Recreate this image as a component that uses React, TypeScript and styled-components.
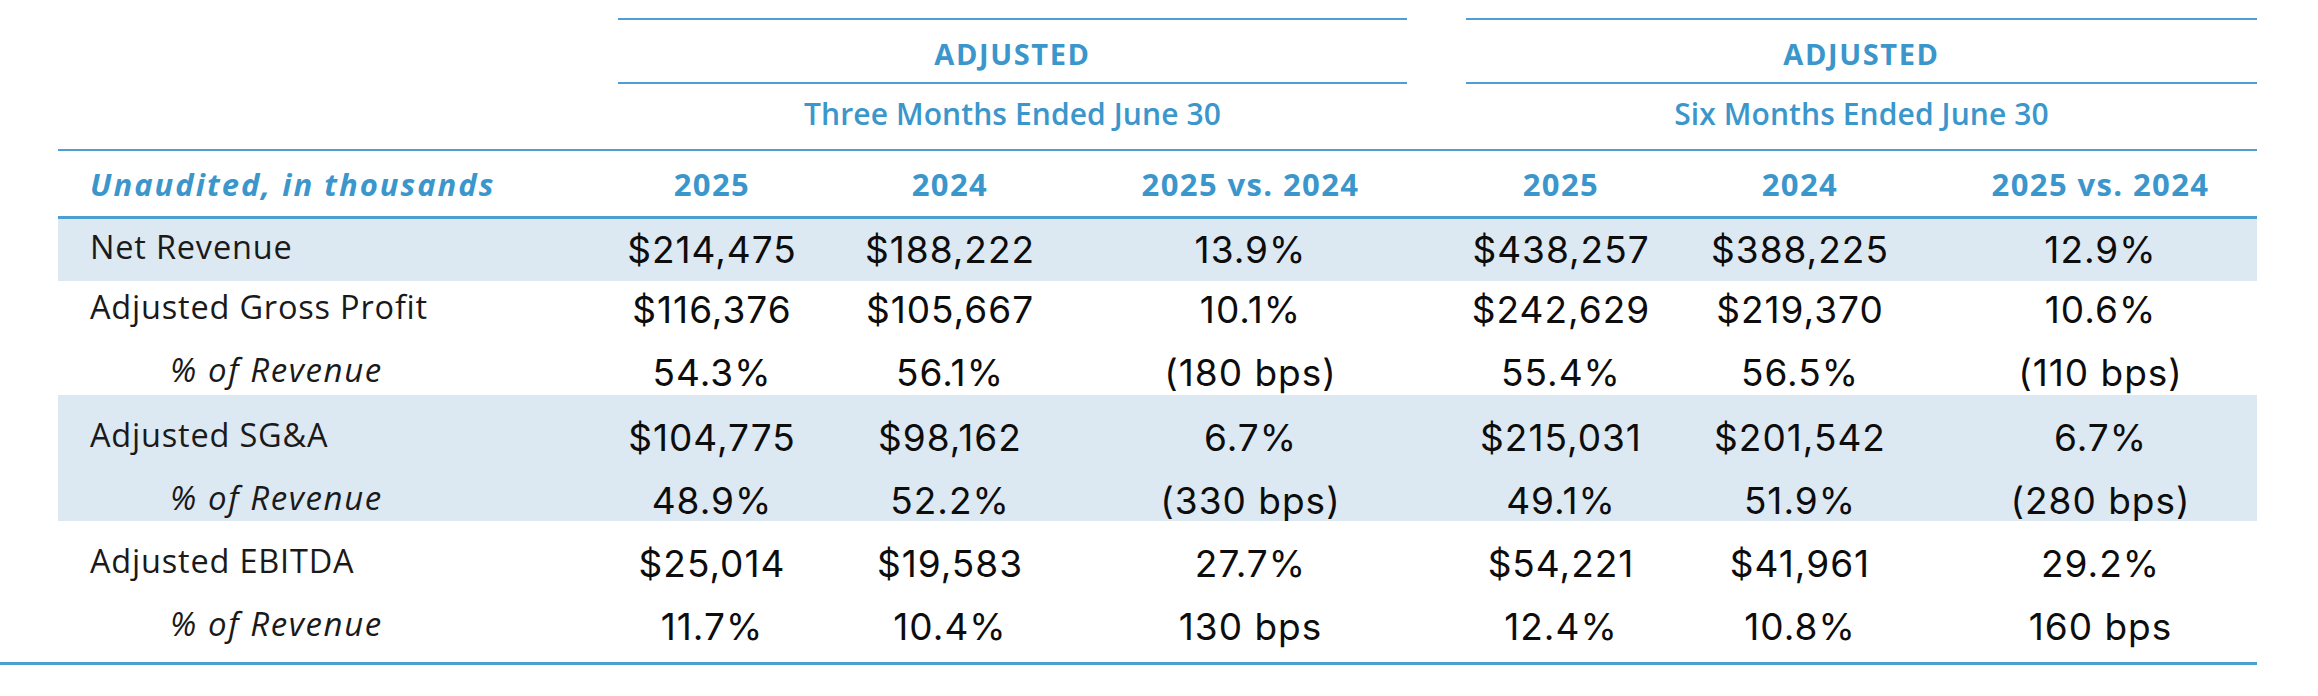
import styled, { createGlobalStyle } from 'styled-components'

const BLUE = '#3b96cc'
const RULE = '#4d9fd1'
const SHADE = '#dce8f2'
const COLS = '560px 188px 288px 313px 59px 190px 288px 313px'

const GlobalStyle = createGlobalStyle`
  body {
    margin: 0;
    background: #ffffff;
  }
`

type Line = {
  label: string
  sub?: boolean
  values: string[]
}

type Group = {
  shaded: boolean
  pt: number
  pb: number
  lines: Line[]
}

const groups: Group[] = [
  {
    shaded: true,
    pt: 13,
    pb: 13,
    lines: [{ label: 'Net Revenue', values: ['$214,475', '$188,222', '13.9%', '$438,257', '$388,225', '12.9%'] }],
  },
  {
    shaded: false,
    pt: 11,
    pb: 4,
    lines: [
      { label: 'Adjusted Gross Profit', values: ['$116,376', '$105,667', '10.1%', '$242,629', '$219,370', '10.6%'] },
      { label: '% of Revenue', sub: true, values: ['54.3%', '56.1%', '(180 bps)', '55.4%', '56.5%', '(110 bps)'] },
    ],
  },
  {
    shaded: true,
    pt: 25,
    pb: 2,
    lines: [
      { label: 'Adjusted SG&A', values: ['$104,775', '$98,162', '6.7%', '$215,031', '$201,542', '6.7%'] },
      { label: '% of Revenue', sub: true, values: ['48.9%', '52.2%', '(330 bps)', '49.1%', '51.9%', '(280 bps)'] },
    ],
  },
  {
    shaded: false,
    pt: 25,
    pb: 17,
    lines: [
      { label: 'Adjusted EBITDA', values: ['$25,014', '$19,583', '27.7%', '$54,221', '$41,961', '29.2%'] },
      { label: '% of Revenue', sub: true, values: ['11.7%', '10.4%', '130 bps', '12.4%', '10.8%', '160 bps'] },
    ],
  },
]

const periods = ['Three Months Ended June 30', 'Six Months Ended June 30']
const colHeads = ['2025', '2024', '2025 vs. 2024']

export default function App() {
  return (
    <>
      <GlobalStyle />
      <Page>
        <BandRow>
          <LabelSpace />
          {periods.map((p, i) => (
            <PeriodBlock key={p} $col={i === 0 ? 2 : 6}>
              <AdjTitle>ADJUSTED</AdjTitle>
              <PeriodTitle>{p}</PeriodTitle>
            </PeriodBlock>
          ))}
        </BandRow>
        <HeadRow>
          <HeadLabel>Unaudited, in thousands</HeadLabel>
          {colHeads.map((h) => (
            <HeadCell key={'a' + h}>{h}</HeadCell>
          ))}
          <Spacer />
          {colHeads.map((h) => (
            <HeadCell key={'b' + h}>{h}</HeadCell>
          ))}
        </HeadRow>
        {groups.map((g, gi) => (
          <GroupRows key={gi} $shaded={g.shaded} $pt={g.pt} $pb={g.pb}>
            {g.lines.map((l, li) => [
              <Label key={`l${li}`} $sub={!!l.sub}>
                {l.label}
              </Label>,
              ...l.values.slice(0, 3).map((v, vi) => <Num key={`a${li}${vi}`}>{v}</Num>),
              <Spacer key={`s${li}`} />,
              ...l.values.slice(3).map((v, vi) => <Num key={`b${li}${vi}`}>{v}</Num>),
            ])}
          </GroupRows>
        ))}
      </Page>
    </>
  )
}

const Page = styled.div`
  width: 2199px;
  padding: 18px 0 0 58px;
  display: flex;
  flex-direction: column;
  border-bottom: 3px solid ${RULE};
  box-sizing: content-box;
`

const BandRow = styled.div`
  display: grid;
  grid-template-columns: ${COLS};
  border-bottom: 2px solid ${RULE};
`

const LabelSpace = styled.div`
  grid-column: 1;
`

const PeriodBlock = styled.div<{ $col: number }>`
  grid-column: ${({ $col }) => `${$col} / span 3`};
  display: flex;
  flex-direction: column;
  border-top: 2px solid ${RULE};
`

const AdjTitle = styled.div`
  height: 64px;
  border-bottom: 2px solid ${RULE};
  display: flex;
  align-items: center;
  justify-content: center;
  padding-top: 4px;
  box-sizing: border-box;
  font-family: 'Open Sans', sans-serif;
  font-weight: 700;
  font-size: 29px;
  letter-spacing: 1.6px;
  color: ${BLUE};
`

const PeriodTitle = styled.div`
  height: 65px;
  display: flex;
  align-items: center;
  justify-content: center;
  padding-bottom: 6px;
  box-sizing: border-box;
  font-family: 'Open Sans', sans-serif;
  font-weight: 600;
  font-size: 30px;
  letter-spacing: 0.1px;
  color: ${BLUE};
`

const HeadRow = styled.div`
  display: grid;
  grid-template-columns: ${COLS};
  height: 65px;
  align-items: center;
  border-bottom: 3px solid ${RULE};
  font-family: 'Open Sans', sans-serif;
  color: ${BLUE};
`

const HeadLabel = styled.div`
  padding-left: 32px;
  font-weight: 700;
  font-style: italic;
  font-size: 31px;
  letter-spacing: 2px;
  white-space: nowrap;
`

const HeadCell = styled.div`
  text-align: center;
  font-weight: 700;
  font-size: 31px;
  letter-spacing: 1.4px;
  white-space: nowrap;
`

const Spacer = styled.div``

const GroupRows = styled.div<{ $shaded: boolean; $pt: number; $pb: number }>`
  display: grid;
  grid-template-columns: ${COLS};
  grid-auto-rows: 36px;
  row-gap: 27px;
  padding: ${({ $pt, $pb }) => `${$pt}px 0 ${$pb}px`};
  background: ${({ $shaded }) => ($shaded ? SHADE : '#ffffff')};
  align-items: center;
`

const Label = styled.div<{ $sub: boolean }>`
  padding-left: ${({ $sub }) => ($sub ? '112px' : '32px')};
  margin-top: -7px;
  font-family: 'Open Sans', sans-serif;
  font-size: ${({ $sub }) => ($sub ? '33px' : '32.5px')};
  font-style: ${({ $sub }) => ($sub ? 'italic' : 'normal')};
  letter-spacing: ${({ $sub }) => ($sub ? '1.6px' : '0.8px')};
  line-height: 36px;
  color: #1a1a1a;
  white-space: nowrap;
`

const Num = styled.div`
  text-align: center;
  font-family: Inter, 'Liberation Sans', sans-serif;
  font-size: 37px;
  line-height: 36px;
  letter-spacing: 1px;
  color: #0d0d0d;
  white-space: nowrap;
`
